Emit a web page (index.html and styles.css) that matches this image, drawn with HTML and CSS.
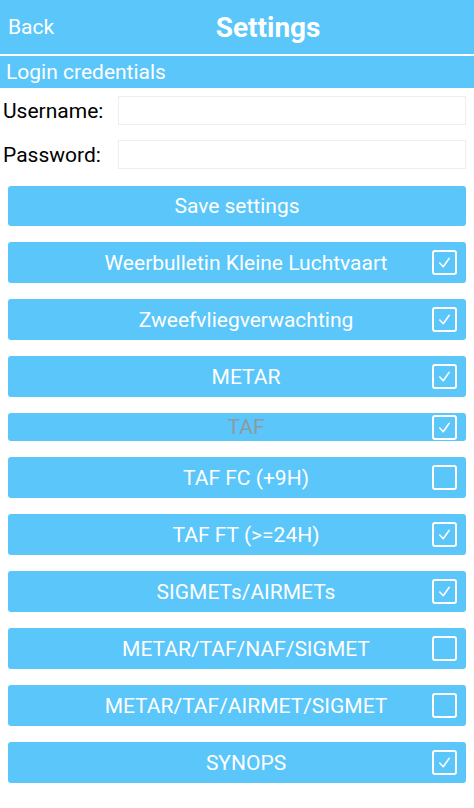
FILE: index.html
```html
<!DOCTYPE html>
<html lang="en">
<head>
    <meta charset="UTF-8">
    <meta name="viewport" content="width=device-width, initial-scale=1.0">
    <link rel="stylesheet" href="styles.css">
    <title>Settings</title>
</head>
<body>

    <header class="topbar">
        <span class="back">Back</span>
        <h1>Settings</h1>
    </header>

    <div class="section">Login credentials</div>

    <form class="login">
        <div class="field">
            <label for="username">Username:</label>
            <input type="text" id="username">
        </div>
        <div class="field">
            <label for="password">Password:</label>
            <input type="password" id="password">
        </div>
    </form>

    <div class="list">
        <button type="button" class="save">Save settings</button>

        <div class="item"><span class="name">Weerbulletin Kleine Luchtvaart</span><span class="box"><svg viewBox="0 0 20 20"><polyline points="5.5,10.5 8.8,14 14.5,6"/></svg></span></div>
        <div class="item"><span class="name">Zweefvliegverwachting</span><span class="box"><svg viewBox="0 0 20 20"><polyline points="5.5,10.5 8.8,14 14.5,6"/></svg></span></div>
        <div class="item"><span class="name">METAR</span><span class="box"><svg viewBox="0 0 20 20"><polyline points="5.5,10.5 8.8,14 14.5,6"/></svg></span></div>
        <div class="item small"><span class="name dim">TAF</span><span class="box"><svg viewBox="0 0 20 20"><polyline points="5.5,10.5 8.8,14 14.5,6"/></svg></span></div>
        <div class="item"><span class="name">TAF FC (+9H)</span><span class="box"></span></div>
        <div class="item"><span class="name">TAF FT (&gt;=24H)</span><span class="box"><svg viewBox="0 0 20 20"><polyline points="5.5,10.5 8.8,14 14.5,6"/></svg></span></div>
        <div class="item"><span class="name">SIGMETs/AIRMETs</span><span class="box"><svg viewBox="0 0 20 20"><polyline points="5.5,10.5 8.8,14 14.5,6"/></svg></span></div>
        <div class="item"><span class="name">METAR/TAF/NAF/SIGMET</span><span class="box"></span></div>
        <div class="item"><span class="name">METAR/TAF/AIRMET/SIGMET</span><span class="box"></span></div>
        <div class="item"><span class="name">SYNOPS</span><span class="box"><svg viewBox="0 0 20 20"><polyline points="5.5,10.5 8.8,14 14.5,6"/></svg></span></div>
    </div>

</body>
</html>
```

FILE: styles.css
```css
body {
    margin: 0;
    font-family: Roboto, "Noto Sans", sans-serif;
    background-color: #fff;
    color: #000;
}

.topbar {
    height: 54px;
    background-color: #5ac6fa;
    border-bottom: 2px solid #fff;
    display: flex;
    align-items: center;
}

.back {
    color: #fff;
    font-size: 21px;
    padding-left: 8px;
}

.topbar h1 {
    margin: 0;
    font-size: 28px;
    font-weight: bold;
    color: #fff;
    flex: 1;
    text-align: center;
    padding-left: 8px;
}

.section {
    height: 32px;
    line-height: 32px;
    background-color: #5ac6fa;
    color: #fff;
    font-size: 21px;
    padding-left: 6px;
}

.login {
    padding: 8px 8px 0 3px;
}

.field {
    display: flex;
    align-items: center;
    margin-bottom: 15px;
}

.field label {
    width: 115px;
    font-size: 21px;
}

.field input {
    flex: 1;
    height: 29px;
    box-sizing: border-box;
    border: 1px solid #eee;
    margin: 0;
}

.list {
    padding: 2px 8px 0 8px;
    display: flex;
    flex-direction: column;
    gap: 16px;
}

.save {
    height: 40px;
    border: none;
    border-radius: 3px;
    background-color: #5ac6fa;
    color: #fff;
    font-family: Roboto, "Noto Sans", sans-serif;
    font-size: 21px;
    padding: 0;
}

.item {
    height: 41px;
    border-radius: 3px;
    background-color: #5ac6fa;
    display: flex;
    align-items: center;
    padding-left: 52px;
    padding-right: 9px;
}

.item.small {
    height: 28px;
}

.name {
    flex: 1;
    text-align: center;
    color: #fff;
    font-size: 21px;
}

.name.dim {
    color: #8f9aa0;
}

.box {
    width: 21px;
    height: 21px;
    border: 2px solid #fff;
    border-radius: 3px;
    display: flex;
}

.box svg {
    width: 21px;
    height: 21px;
    fill: none;
    stroke: #fff;
    stroke-width: 1.5;
    stroke-linecap: round;
    stroke-linejoin: round;
}
```
